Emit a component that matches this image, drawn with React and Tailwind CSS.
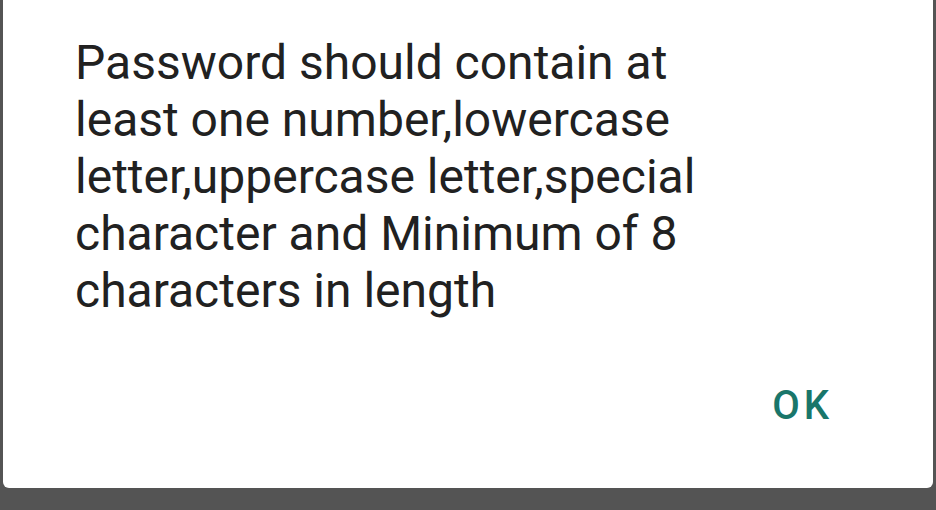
export default function App() {
  return (
    <div className="w-[936px] h-[510px] bg-[#545454] overflow-hidden" style={{ fontFamily: "Roboto, 'Noto Sans', sans-serif" }}>
      <div className="ml-[3px] w-[930px] h-[488px] bg-white rounded-b-[6px] flex flex-col">
        <div className="pl-[72px] pr-[20px] pt-[34px] text-[48px] leading-[57px] text-[#212121] whitespace-nowrap">
          Password should contain at<br />
          least one number,lowercase<br />
          letter,uppercase letter,special<br />
          character and Minimum of 8<br />
          characters in length
        </div>
        <div className="flex justify-end pr-[100px] mt-[63px]">
          <span className="text-[40px] leading-[48px] font-medium tracking-[4px] text-[#19766a]">OK</span>
        </div>
      </div>
    </div>
  );
}
